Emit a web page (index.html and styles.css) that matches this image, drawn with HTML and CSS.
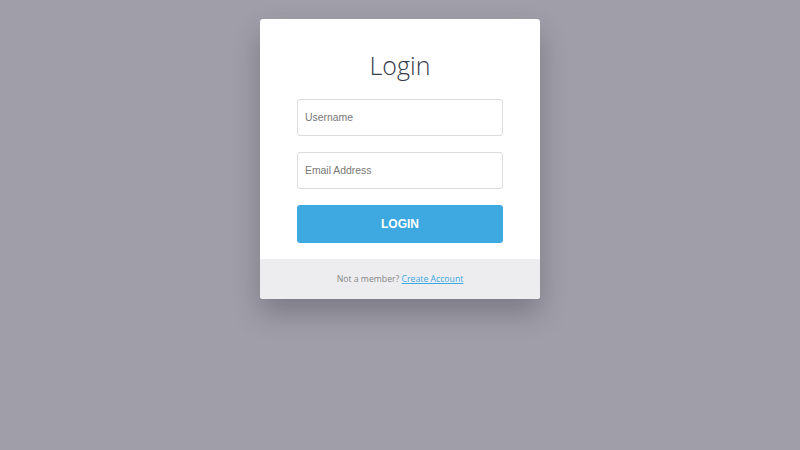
FILE: index.html
```html
<!DOCTYPE html>
<html lang="en">
  <head>
    <meta charset="UTF-8" />
    <meta name="viewport" content="width=device-width, initial-scale=1.0" />
    <title>Login</title>
    <link rel="stylesheet" href="styles.css">
  </head>
  <body>
    <div class="page">
      <div class="login-box">
        <form class="login-form" onsubmit="return false;">
          <h1>Login</h1>
          <input type="text" class="field" placeholder="Username" />
          <input type="email" class="field" placeholder="Email Address" />
          <button type="submit" class="login-btn">LOGIN</button>
        </form>
        <div class="login-footer">
          Not a member? <a href="#">Create Account</a>
        </div>
      </div>
    </div>
  </body>
</html>
```

FILE: styles.css
```css
html,
body {
  height: 100%;
}
body {
  margin: 0;
  padding: 0;
  background-color: #a09fa9;
  font-family: "Open Sans", sans-serif;
}
.page {
  min-height: 100%;
  padding-top: 19px;
  box-sizing: border-box;
}
.login-box {
  width: 280px;
  margin: 0 auto;
  background-color: #fff;
  border-radius: 3px;
  box-shadow: 0 14px 28px rgba(30, 28, 40, 0.28);
  overflow: hidden;
}
.login-form {
  display: flex;
  flex-direction: column;
  gap: 16px;
  padding: 28px 37px 16px;
}
.login-form h1 {
  margin: -1px 0 -1px;
  font-size: 25px;
  font-weight: 300;
  line-height: 38px;
  color: #353b4a;
  text-align: center;
}
.field {
  box-sizing: border-box;
  height: 37px;
  padding: 0 7px;
  border: 1px solid #dcdcdc;
  border-radius: 3px;
  font-family: "Liberation Sans", Arial, sans-serif;
  font-size: 10.4px;
  color: #333;
}
.field::placeholder {
  color: #777;
}
.login-btn {
  height: 38px;
  border: none;
  border-radius: 3px;
  background-color: #3ea8e1;
  color: #fff;
  font-family: "Liberation Sans", Arial, sans-serif;
  font-size: 12px;
  font-weight: bold;
  cursor: pointer;
}
.login-footer {
  height: 40px;
  line-height: 40px;
  background-color: #ededf0;
  text-align: center;
  font-size: 8.7px;
  color: #858585;
}
.login-footer a {
  color: #3ea8e1;
}
```
